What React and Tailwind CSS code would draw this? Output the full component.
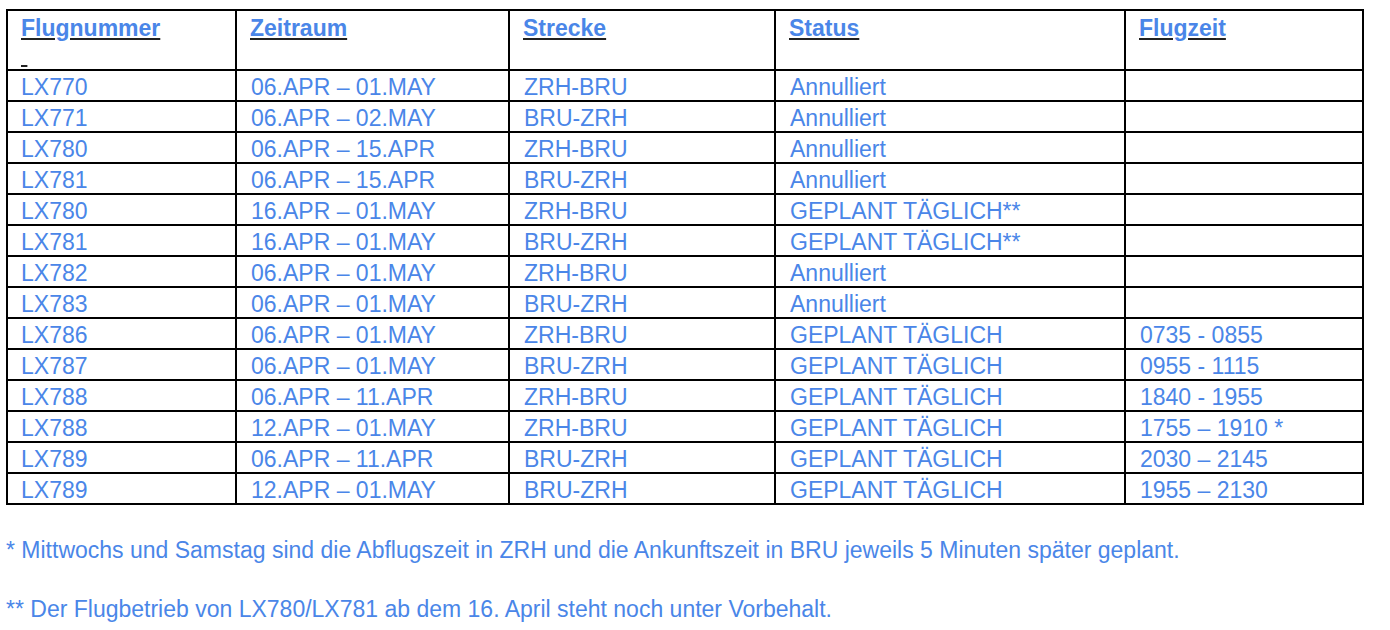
import React from "react";

const rows = [
  ["LX770", "06.APR – 01.MAY", "ZRH-BRU", "Annulliert", ""],
  ["LX771", "06.APR – 02.MAY", "BRU-ZRH", "Annulliert", ""],
  ["LX780", "06.APR – 15.APR", "ZRH-BRU", "Annulliert", ""],
  ["LX781", "06.APR – 15.APR", "BRU-ZRH", "Annulliert", ""],
  ["LX780", "16.APR – 01.MAY", "ZRH-BRU", "GEPLANT TÄGLICH**", ""],
  ["LX781", "16.APR – 01.MAY", "BRU-ZRH", "GEPLANT TÄGLICH**", ""],
  ["LX782", "06.APR – 01.MAY", "ZRH-BRU", "Annulliert", ""],
  ["LX783", "06.APR – 01.MAY", "BRU-ZRH", "Annulliert", ""],
  ["LX786", "06.APR – 01.MAY", "ZRH-BRU", "GEPLANT TÄGLICH", "0735 - 0855"],
  ["LX787", "06.APR – 01.MAY", "BRU-ZRH", "GEPLANT TÄGLICH", "0955 - 1115"],
  ["LX788", "06.APR – 11.APR", "ZRH-BRU", "GEPLANT TÄGLICH", "1840 - 1955"],
  ["LX788", "12.APR – 01.MAY", "ZRH-BRU", "GEPLANT TÄGLICH", "1755 – 1910 *"],
  ["LX789", "06.APR – 11.APR", "BRU-ZRH", "GEPLANT TÄGLICH", "2030 – 2145"],
  ["LX789", "12.APR – 01.MAY", "BRU-ZRH", "GEPLANT TÄGLICH", "1955 – 2130"],
];

const headers = ["Flugnummer", "Zeitraum", "Strecke", "Status", "Flugzeit"];

export default function App() {
  return (
    <div
      className="w-[1390px] h-[630px] bg-white text-[#4a86e8] text-[23px] leading-[27px] overflow-hidden"
      style={{ fontFamily: '"Liberation Sans", Arial, sans-serif' }}
    >
      <div className="ml-[6px] pt-[9px]">
        <div className="grid grid-cols-[229px_273px_266px_350px_238px] w-[1358px] border-r-2 border-b-2 border-black">
          {headers.map((h, i) => (
            <div
              key={h}
              className="border-l-2 border-t-2 border-black pl-[13px] pt-[4px] h-[60px] font-bold"
            >
              <div>
                <span className="underline decoration-[#222]">{h}</span>
              </div>
              {i === 0 && (
                <div>
                  <span className="underline decoration-[#222]">{"\u00a0"}</span>
                </div>
              )}
            </div>
          ))}
          {rows.map((r, ri) =>
            r.map((c, ci) => (
              <div
                key={ri + "-" + ci}
                className={
                  "border-l-2 border-t-2 border-black pt-[3px] h-[31px] whitespace-nowrap " +
                  (ci === 0 ? "pl-[13px]" : "pl-[14px]")
                }
              >
                {c}
              </div>
            ))
          )}
        </div>
      </div>
      <p className="ml-[6px] mt-[32px]">
        * Mittwochs und Samstag sind die Abflugszeit in ZRH und die Ankunftszeit in BRU jeweils 5 Minuten später geplant.
      </p>
      <p className="ml-[6px] mt-[32px]">
        ** Der Flugbetrieb von LX780/LX781 ab dem 16. April steht noch unter Vorbehalt.
      </p>
    </div>
  );
}
